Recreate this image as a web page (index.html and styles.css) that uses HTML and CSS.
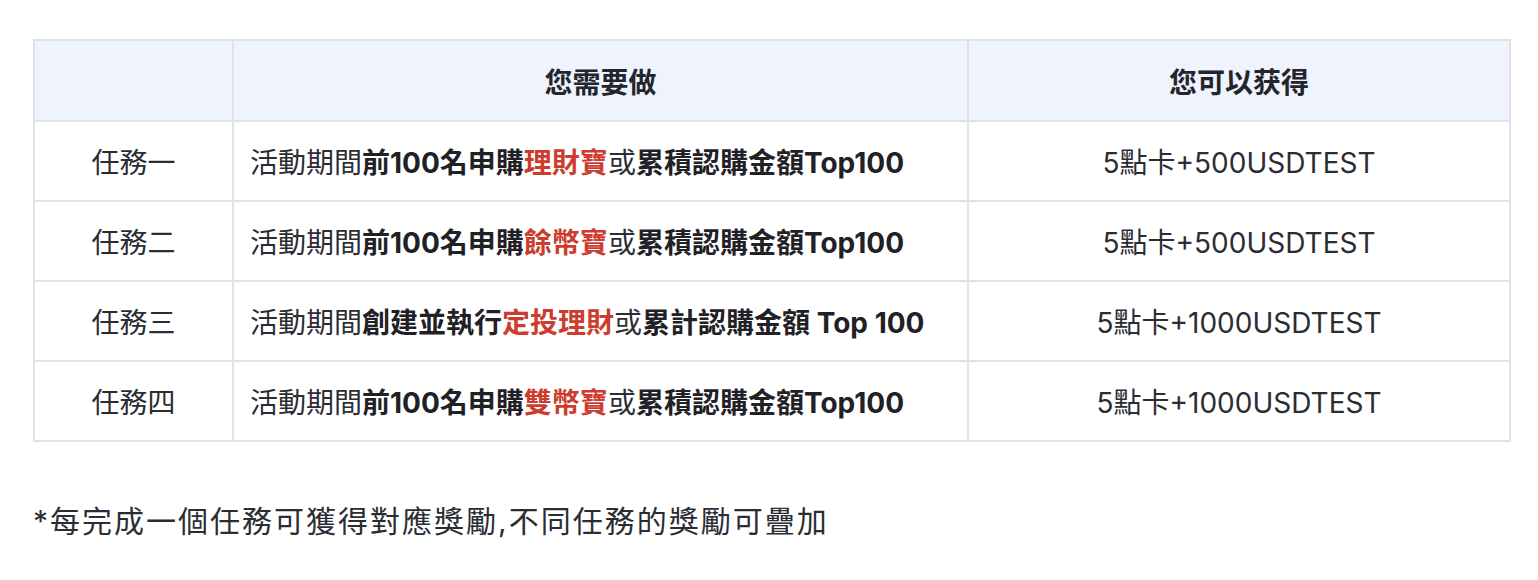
FILE: index.html
```html
<!DOCTYPE html>
<html lang="zh-Hant">
<head>
<meta charset="utf-8">
<link rel="stylesheet" href="styles.css">
</head>
<body>
<div class="page">
  <table class="tasks">
    <colgroup>
      <col class="c1"><col class="c2"><col class="c3">
    </colgroup>
    <thead>
      <tr><th></th><th>您需要做</th><th>您可以获得</th></tr>
    </thead>
    <tbody>
      <tr>
        <td class="name">任務一</td>
        <td class="desc">活動期間<b>前100名申購</b><b class="red">理財寶</b>或<b>累積認購金額Top100</b></td>
        <td class="reward">5點卡+500USDTEST</td>
      </tr>
      <tr>
        <td class="name">任務二</td>
        <td class="desc">活動期間<b>前100名申購</b><b class="red">餘幣寶</b>或<b>累積認購金額Top100</b></td>
        <td class="reward">5點卡+500USDTEST</td>
      </tr>
      <tr>
        <td class="name">任務三</td>
        <td class="desc">活動期間<b>創建並執行</b><b class="red">定投理財</b>或<b>累計認購金額 Top 100</b></td>
        <td class="reward">5點卡+1000USDTEST</td>
      </tr>
      <tr>
        <td class="name">任務四</td>
        <td class="desc">活動期間<b>前100名申購</b><b class="red">雙幣寶</b>或<b>累積認購金額Top100</b></td>
        <td class="reward">5點卡+1000USDTEST</td>
      </tr>
    </tbody>
  </table>
  <p class="note">*每完成一個任務可獲得對應獎勵,不同任務的獎勵可疊加</p>
</div>
</body>
</html>
```
FILE: styles.css
```css
html, body {
  margin: 0;
  padding: 0;
  background: #ffffff;
}
body {
  font-family: Inter, "Noto Sans CJK TC", "Noto Sans", sans-serif;
  color: #2b2d33;
}
.page {
  padding: 39px 0 0 33px;
}
.tasks {
  border-collapse: collapse;
  width: 1476px;
  table-layout: fixed;
  font-size: 28px;
}
.c1 { width: 199px; }
.c2 { width: 735px; }
.c3 { width: 542px; }
.tasks th,
.tasks td {
  border: 2px solid #e1e2e8;
  padding: 0;
  vertical-align: middle;
}
.tasks th {
  height: 79px;
  background: #eff3fe;
  font-weight: 600;
  color: #23252b;
  text-align: center;
}
.tasks td {
  height: 78px;
}
.name, .reward {
  text-align: center;
  font-weight: 400;
}
.desc {
  padding-left: 16px !important;
  text-align: left;
  white-space: nowrap;
}
.desc b {
  font-weight: 700;
  color: #1f2126;
}
.desc b.red {
  color: #cc3d2f;
}
.note {
  margin: 55px 0 0 0;
  font-size: 30px;
  letter-spacing: 2px;
  color: #2b2d33;
}
```
